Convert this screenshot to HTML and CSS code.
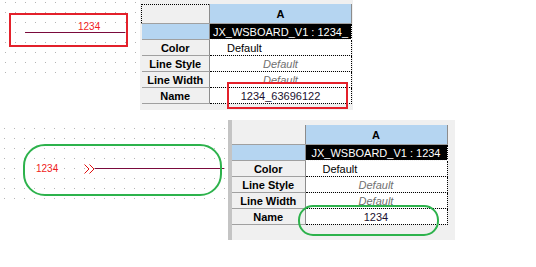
FILE: index.html
```html
<!DOCTYPE html>
<html lang="en">
<head>
  <meta charset="UTF-8">
  <title>Net name vs. Name property</title>
  <link rel="stylesheet" href="styles.css">
</head>
<body>
  <!-- before: net label shows short name, property holds suffixed name -->
  <div class="shot shot-top">
    <div class="canvas canvas-top">
      <div class="net-box">
        <span class="net-label">1234</span>
        <div class="net-line"></div>
      </div>
    </div>
    <div class="sheet sheet-top">
      <table class="props">
        <colgroup><col class="col-head"><col class="col-val"></colgroup>
        <tr>
          <td class="corner"></td>
          <td class="col-title">A</td>
        </tr>
        <tr>
          <td class="row-blue"></td>
          <td class="obj-name">JX_WSBOARD_V1 : 1234_</td>
        </tr>
        <tr><td class="label">Color</td><td class="val val-left">Default</td></tr>
        <tr><td class="label">Line Style</td><td class="val val-dim">Default</td></tr>
        <tr><td class="label">Line Width</td><td class="val val-dim">Default</td></tr>
        <tr><td class="label">Name</td><td class="val">1234_63696122</td></tr>
      </table>
      <div class="mark mark-red"></div>
    </div>
  </div>

  <!-- after: off-page connector, name matches -->
  <div class="shot shot-bottom">
    <div class="canvas canvas-bottom">
      <div class="signal">
        <span class="net-label">1234</span>
        <svg class="chevrons" width="11" height="10" viewBox="0 0 11 10">
          <polyline points="0.5,0.5 5,5 0.5,9.5" fill="none" stroke="#e01010" stroke-width="1"/>
          <polyline points="5.5,0.5 10,5 5.5,9.5" fill="none" stroke="#e01010" stroke-width="1"/>
        </svg>
        <div class="net-line"></div>
      </div>
      <div class="mark mark-green-wide"></div>
    </div>
    <div class="sheet sheet-bottom">
      <table class="props">
        <colgroup><col class="col-head-b"><col class="col-val"></colgroup>
        <tr>
          <td class="corner corner-plain"></td>
          <td class="col-title">A</td>
        </tr>
        <tr>
          <td class="row-blue"></td>
          <td class="obj-name">JX_WSBOARD_V1 : 1234</td>
        </tr>
        <tr><td class="label">Color</td><td class="val val-left">Default</td></tr>
        <tr><td class="label">Line Style</td><td class="val val-dim">Default</td></tr>
        <tr><td class="label">Line Width</td><td class="val val-dim">Default</td></tr>
        <tr><td class="label">Name</td><td class="val">1234</td></tr>
      </table>
      <div class="mark mark-green"></div>
    </div>
  </div>
</body>
</html>
```
FILE: styles.css
```css
* {
  margin: 0;
  padding: 0;
  box-sizing: border-box;
}
body {
  width: 536px;
  height: 267px;
  background: #fff;
  font-family: "Liberation Sans", Arial, sans-serif;
  font-size: 11px;
  color: #000;
  overflow: hidden;
}

.shot {
  display: flex;
  align-items: flex-start;
}
.shot-top {
  height: 110px;
}
.shot-bottom {
  margin-top: 10px;
  height: 125px;
}

/* schematic canvas with 10px dot grid */
.canvas {
  position: relative;
  background-color: #b4b4b4;
  background-image:
    linear-gradient(90deg, transparent 0 1px, #fff 1px),
    linear-gradient(transparent 0 1px, #fff 1px);
  background-size: 10px 10px;
}
.canvas-top {
  width: 140px;
  height: 75px;
  padding: 13px 0 0 9px;
  background-position: 5px 2px;
}
.canvas-bottom {
  width: 228px;
  height: 80px;
  padding-top: 43px;
  background-position: 14px 8px;
}

.net-box {
  width: 119px;
  height: 34px;
  border: 2px solid #e3202a;
  display: flex;
  flex-direction: column;
}
.net-label {
  font-size: 10px;
  line-height: 10px;
  color: #f01c1c;
}
.net-box .net-label {
  margin: 7px 0 0 67px;
}
.net-line {
  height: 1px;
  background: #7a0a3c;
}
.net-box .net-line {
  margin-left: 14px;
  width: 100px;
}

.signal {
  display: flex;
  align-items: center;
  height: 11px;
  padding-left: 36px;
}
.signal .chevrons {
  margin-left: 26px;
  flex: none;
}
.signal .net-line {
  flex: 1;
  margin-right: 4px;
}

/* property sheet */
.sheet {
  position: relative;
  background: #f0f0f0;
}
.sheet-top {
  width: 213px;
  height: 110px;
  padding: 4px 0 0 1px;
}
.sheet-bottom {
  width: 227px;
  height: 120px;
  padding-top: 5px;
  border-left: 4px solid #c4c4c4;
}

.props {
  border-collapse: collapse;
  table-layout: fixed;
}
.col-head { width: 68px; }
.col-head-b { width: 73px; }
.col-val { width: 142px; }

.props td {
  height: 16px;
  padding: 0;
  line-height: 14px;
  text-align: center;
  white-space: nowrap;
  overflow: hidden;
}
.props tr:first-child td {
  height: 19px;
}
.corner {
  background: #f0f0f0;
  border-top: 1px dotted #000;
  border-left: 1px dotted #000;
  border-bottom: 1px solid #a0a0a0;
  border-right: 1px solid #8c8c8c;
}
.corner-plain {
  border-top: 0;
  border-left: 0;
}
.col-title {
  background: #b5d5f1;
  font-weight: bold;
  border-top: 1px solid #b5d5f1;
  border-bottom: 1px solid #a0a0a0;
  border-right: 1px solid #8c8c8c;
}
.row-blue {
  background: #b5d5f1;
  border-bottom: 1px solid #a0a0a0;
  border-right: 1px solid #8c8c8c;
}
.obj-name {
  background: #000;
  color: #fff;
  border-bottom: 1px dotted #fff;
  border-right: 1px dotted #000;
}
.label {
  background: #f0f0f0;
  font-weight: bold;
  border-bottom: 1px solid #a0a0a0;
  border-right: 1px solid #8c8c8c;
}
.val {
  background: #fff;
  color: #1a1030;
  border-bottom: 1px dotted #000;
  border-right: 1px dotted #000;
}
.val-left {
  text-align: left !important;
  padding-left: 17px !important;
  color: #000;
}
.val-dim {
  font-style: italic;
  color: #707070;
}

/* annotation marks drawn over the screenshot */
.mark {
  position: absolute;
  pointer-events: none;
}
.mark-red {
  left: 87px;
  top: 82px;
  width: 121px;
  height: 27px;
  border: 2px solid #e3202a;
}
.mark-green-wide {
  left: 23px;
  top: 24px;
  width: 199px;
  height: 52px;
  border: 2px solid #2db24c;
  border-radius: 22px;
}
.mark-green {
  left: 66px;
  top: 85px;
  width: 141px;
  height: 31px;
  border: 2px solid #2db24c;
  border-radius: 15px;
}
```
